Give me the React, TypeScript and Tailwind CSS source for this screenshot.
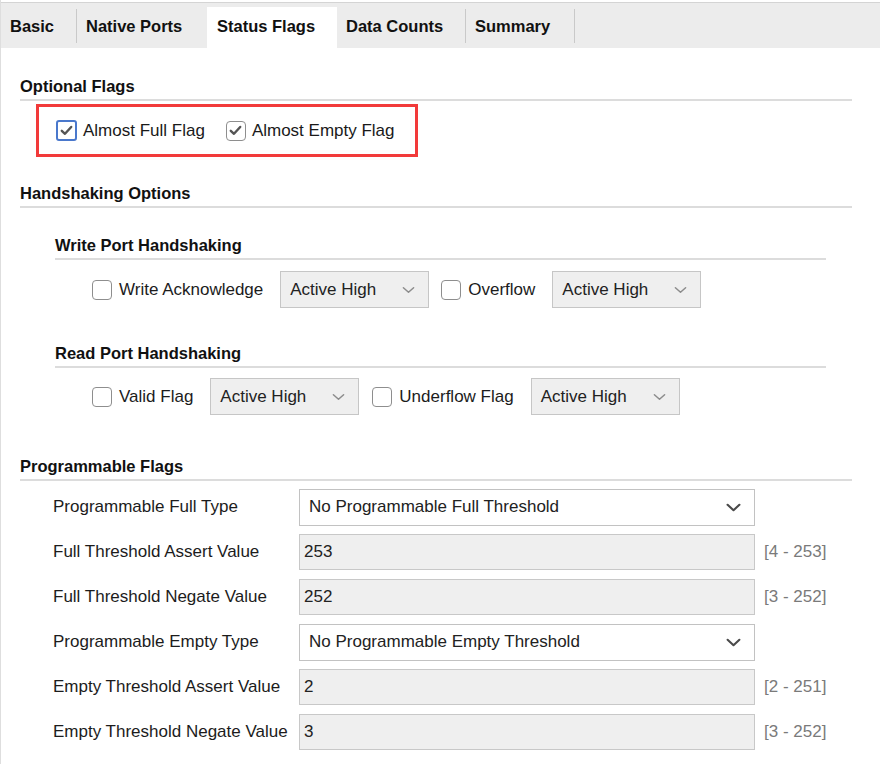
import type { ReactNode } from "react";

const tabs = [
  { label: "Basic", width: "w-[76px]", sep: true },
  { label: "Native Ports", width: "w-[130px]", sep: false },
  { label: "Status Flags", width: "w-[130px]", active: true, sep: false },
  { label: "Data Counts", width: "w-[129px]", sep: true },
  { label: "Summary", width: "w-[109px]", sep: true },
];

const progRows = [
  { label: "Programmable Full Type", value: "No Programmable Full Threshold", kind: "select" },
  { label: "Full Threshold Assert Value", value: "253", kind: "input", range: "[4 - 253]" },
  { label: "Full Threshold Negate Value", value: "252", kind: "input", range: "[3 - 252]" },
  { label: "Programmable Empty Type", value: "No Programmable Empty Threshold", kind: "select" },
  { label: "Empty Threshold Assert Value", value: "2", kind: "input", range: "[2 - 251]" },
  { label: "Empty Threshold Negate Value", value: "3", kind: "input", range: "[3 - 252]" },
];

function Chevron({ dark = false }: { dark?: boolean }) {
  return (
    <svg
      width={dark ? 15 : 13}
      height={dark ? 9 : 8}
      viewBox="0 0 14 8"
      fill="none"
      stroke={dark ? "#4a4a4a" : "#8c8c8c"}
      strokeWidth={dark ? 2 : 1.6}
      strokeLinecap="round"
      strokeLinejoin="round"
    >
      <path d="M1.5 1.5 L7 6.5 L12.5 1.5" />
    </svg>
  );
}

function Checkbox({ checked = false, focused = false }: { checked?: boolean; focused?: boolean }) {
  return (
    <div
      className={
        focused
          ? "flex h-[21px] w-[21px] shrink-0 items-center justify-center rounded-[3px] border-2 border-[#4a78cc] bg-white"
          : "flex h-[20px] w-[20px] shrink-0 items-center justify-center rounded-[4px] border-[1.5px] border-[#8e8e8e] bg-white"
      }
    >
      {checked && (
        <svg width="13" height="11" viewBox="0 0 13 11" fill="none" stroke="#555" strokeWidth="2.4" strokeLinecap="round" strokeLinejoin="round">
          <path d="M1.8 5.8 L5 8.8 L11.2 2" />
        </svg>
      )}
    </div>
  );
}

function Heading({ children, className = "", lineClass = "w-[832px]" }: { children: ReactNode; className?: string; lineClass?: string }) {
  return (
    <div className={className}>
      <div className="text-[16.5px] font-bold leading-[18px] text-[#111]">{children}</div>
      <div className={`mt-[4px] h-[2px] bg-[#dcdcdc] ${lineClass}`} />
    </div>
  );
}

function GraySelect() {
  return (
    <div className="flex h-[37px] w-[149px] shrink-0 items-center justify-between border border-[#c6c6c6] bg-[#efefef] pl-[9px] pr-[13px] text-[17px] text-[#222]">
      <span>Active High</span>
      <Chevron />
    </div>
  );
}

function HandshakeItem({ label, gap = "ml-[17px]" }: { label: string; gap?: string }) {
  return (
    <div className="flex items-center">
      <Checkbox />
      <span className="ml-[7px] text-[17px] text-[#1c1c1c]">{label}</span>
      <div className={gap}>
        <GraySelect />
      </div>
    </div>
  );
}

export default function App() {
  return (
    <div className="min-h-[764px] w-[880px] border-l border-[#dedede] bg-white pt-[2px] font-['Liberation_Sans',Arial,sans-serif] text-[#1a1a1a]">
      {/* Tab bar */}
      <div className="flex h-[46px] items-end border-t border-[#d4d4d4] bg-[#ececec]">
        {tabs.map((tab) => (
          <div
            key={tab.label}
            className={
              tab.active
                ? `flex h-[41px] ${tab.width} items-center bg-white pl-[10px] text-[16.5px] font-bold text-[#111]`
                : `flex h-[45px] ${tab.width} items-center justify-between self-start pl-[9px] text-[16.5px] font-bold text-[#111]`
            }
          >
            <span className={tab.active ? "pb-[2px]" : "pt-[2px]"}>{tab.label}</span>
            {tab.sep && <div className="h-[34px] w-px bg-[#c9c9c9]" />}
          </div>
        ))}
      </div>

      <div className="pl-[19px]">
        {/* Optional Flags */}
        <Heading className="mt-[29px]">Optional Flags</Heading>
        <div className="ml-[16px] mt-[3px] flex h-[53px] w-[382px] items-center border-[3px] border-[#f23a3a] pl-[17px] text-[17px]">
          <Checkbox checked focused />
          <span className="ml-[6px]">Almost Full Flag</span>
          <div className="ml-[21px]">
            <Checkbox checked />
          </div>
          <span className="ml-[6px]">Almost Empty Flag</span>
        </div>

        {/* Handshaking Options */}
        <Heading className="mt-[27px]">Handshaking Options</Heading>

        <div className="pl-[35px]">
          <Heading className="mt-[28px]" lineClass="w-[771px]">
            Write Port Handshaking
          </Heading>
          <div className="mt-[11px] flex items-center pl-[37px]">
            <HandshakeItem label="Write Acknowledge" />
            <div className="ml-[12px]">
              <HandshakeItem label="Overflow" />
            </div>
          </div>

          <Heading className="mt-[36px]" lineClass="w-[771px]">
            Read Port Handshaking
          </Heading>
          <div className="mt-[10px] flex items-center pl-[37px]">
            <HandshakeItem label="Valid Flag" />
            <div className="ml-[13px]">
              <HandshakeItem label="Underflow Flag" />
            </div>
          </div>
        </div>

        {/* Programmable Flags */}
        <Heading className="mt-[42px]">Programmable Flags</Heading>
        <div className="mt-[8px] flex flex-col gap-[9px] pl-[33px]">
          {progRows.map((row) => (
            <div key={row.label} className="flex h-[36px] items-center text-[17px]">
              <div className="w-[246px] shrink-0 text-[#1c1c1c]">{row.label}</div>
              {row.kind === "select" ? (
                <div className="flex h-[37px] w-[456px] items-center justify-between border border-[#c2c2c2] bg-white pl-[9px] pr-[13px] text-[#222]">
                  <span>{row.value}</span>
                  <Chevron dark />
                </div>
              ) : (
                <div className="flex h-[36px] w-[456px] items-center border border-[#c8c8c8] bg-[#efefef] pl-[4px] text-[#222]">
                  {row.value}
                </div>
              )}
              {row.range && <span className="ml-[9px] text-[#7a7a7a]">{row.range}</span>}
            </div>
          ))}
        </div>
      </div>
    </div>
  );
}
